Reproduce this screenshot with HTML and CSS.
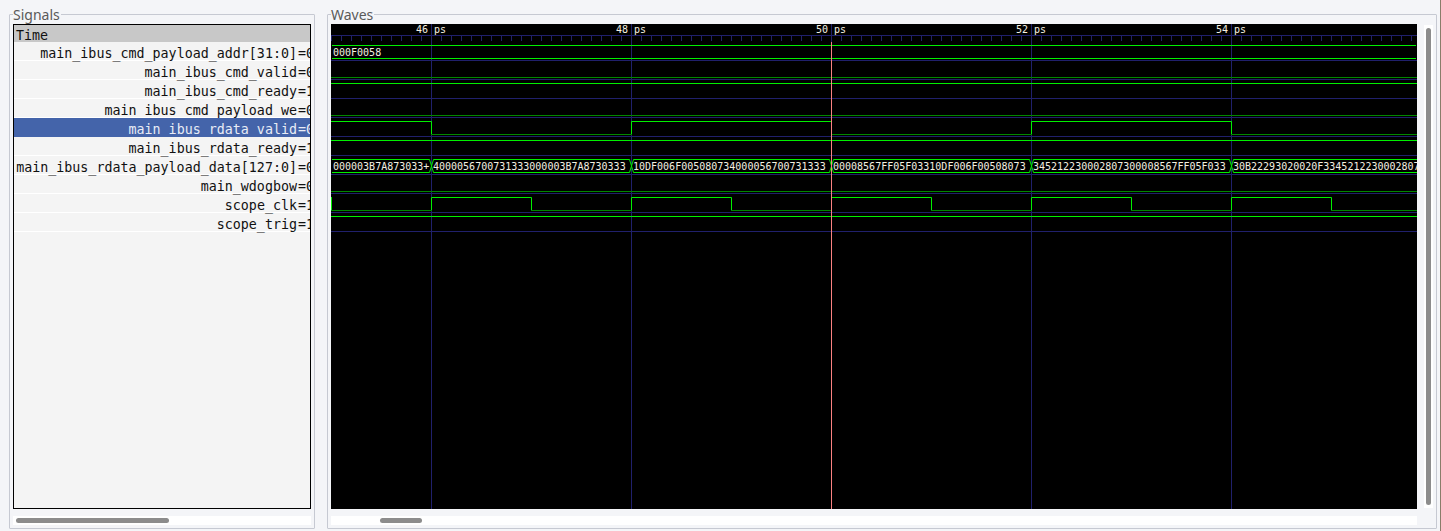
FILE: index.html
```html
<!DOCTYPE html>
<html lang="en">
<head>
    <meta charset="UTF-8">
    <title>Waves</title>
    <link rel="stylesheet" href="styles.css">
</head>
<body>
    <fieldset class="frame signals">
        <legend>Signals</legend>
        <div class="signal-list">
            <div class="time-row">Time</div>
            <div class="row"><span>main_ibus_cmd_payload_addr[31:0]</span><span class="val">=0</span></div>
            <div class="row"><span>main_ibus_cmd_valid</span><span class="val">=0</span></div>
            <div class="row"><span>main_ibus_cmd_ready</span><span class="val">=1</span></div>
            <div class="row"><span>main_ibus_cmd_payload_we</span><span class="val">=0</span></div>
            <div class="row selected"><span>main_ibus_rdata_valid</span><span class="val">=0</span></div>
            <div class="row"><span>main_ibus_rdata_ready</span><span class="val">=1</span></div>
            <div class="row"><span>main_ibus_rdata_payload_data[127:0]</span><span class="val">=0</span></div>
            <div class="row"><span>main_wdogbow</span><span class="val">=0</span></div>
            <div class="row"><span>scope_clk</span><span class="val">=1</span></div>
            <div class="row"><span>scope_trig</span><span class="val">=1</span></div>
        </div>
        <div class="hscroll"><div class="thumb signals-thumb"></div></div>
    </fieldset>

    <fieldset class="frame waves">
        <legend>Waves</legend>
        <div class="waves-body">
            <div class="waves-left">
                <svg class="wave-canvas" width="1086" height="485" viewBox="331 24 1086 485">
                    <!-- grid -->
                    <g class="grid">
                        <path d="M331 35.5H1417M331 60.5H1417M331 79.5H1417M331 98.5H1417M331 117.5H1417M331 136.5H1417M331 155.5H1417M331 174.5H1417M331 193.5H1417M331 212.5H1417M331 231.5H1417"/>
                        <path d="M431.5 24V509M631.5 24V509M831.5 24V42M1031.5 24V509M1231.5 24V509"/>
                        <path class="ticks" d="M331 38.5H1417"/>
                    </g>

                    <!-- 1 bit signals -->
                    <path class="hi" d="M332 45.5H1416M332 58.5H1416"/>
                    <path class="lo" d="M331 77.5H1417"/>
                    <path class="hi" d="M331 83.5H1417"/>
                    <path class="lo" d="M331 115.5H1417"/>
                    <path class="hi" d="M331 121.5H431.5V134M631.5 134V121.5H831.5V134M1031.5 134V121.5H1231.5V134"/>
                    <path class="lo" d="M431 134.5H632M831 134.5H1032M1231 134.5H1417"/>
                    <path class="hi" d="M331 140.5H1417"/>
                    <path class="lo" d="M331 191.5H1417"/>
                    <path class="hi" d="M431.5 210V197.5H531.5V210M631.5 210V197.5H731.5V210M831.5 210V197.5H931.5V210M1031.5 210V197.5H1131.5V210M1231.5 210V197.5H1331.5V210"/>
                    <path class="hi" d="M331.5 197V210"/>
                    <path class="lo" d="M331 210.5H432M531 210.5H632M731 210.5H832M931 210.5H1032M1131 210.5H1232M1331 210.5H1417"/>
                    <path class="hi" d="M331 216.5H1417"/>

                    <!-- data bus -->
                    <path class="hi" d="M332 159.5H429.5L433.5 172.5H629.5L633.5 159.5H829.5L833.5 172.5H1029.5L1033.5 159.5H1229.5L1233.5 172.5H1417"/>
                    <path class="hi" d="M332 172.5H429.5L433.5 159.5H629.5L633.5 172.5H829.5L833.5 159.5H1029.5L1033.5 172.5H1229.5L1233.5 159.5H1417"/>

                    <path class="cursor" d="M831.5 42V509"/>

                    <!-- time labels -->
                    <g class="time-label">
                        <text x="428" y="33" text-anchor="end">46</text><text x="434" y="33">ps</text>
                        <text x="628" y="33" text-anchor="end">48</text><text x="634" y="33">ps</text>
                        <text x="828" y="33" text-anchor="end">50</text><text x="834" y="33">ps</text>
                        <text x="1028" y="33" text-anchor="end">52</text><text x="1034" y="33">ps</text>
                        <text x="1228" y="33" text-anchor="end">54</text><text x="1234" y="33">ps</text>
                    </g>

                    <!-- bus values -->
                    <g class="bus-value">
                        <text x="333" y="56">000F0058</text>
                        <text x="333" y="170">000003B7A873033+</text>
                        <text x="433" y="170">4000056700731333000003B7A8730333</text>
                        <text x="633" y="170">10DF006F005080734000056700731333</text>
                        <text x="833" y="170">00008567FF05F03310DF006F00508073</text>
                        <text x="1033" y="170">345212230002807300008567FF05F033</text>
                        <text x="1233" y="170">30B22293020020F33452122300028073</text>
                    </g>
                </svg>
                <div class="hscroll"><div class="thumb waves-thumb"></div></div>
            </div>
            <div class="vscroll"><div class="vthumb"></div></div>
        </div>
    </fieldset>
</body>
</html>
```

FILE: styles.css
```css
html, body {
    height: 100%;
}

body {
    display: flex;
    gap: 12px;
    box-sizing: border-box;
    height: 531px;
    margin: 0;
    padding: 6px 3px 2px 9px;
    overflow: hidden;
    background-color: #f4f5f8;
    border-right: 1px solid #8a7d6a;
    font-family: "DejaVu Sans Mono", monospace;
}

.frame {
    box-sizing: border-box;
    min-width: 0;
    margin: 0;
    padding: 1px 3px 3px 3px;
    border: 1px solid #c6c9d2;
    border-radius: 1px;
}

.frame legend {
    margin-left: 0;
    padding: 0 1px 0 0;
    font-family: "Noto Sans", sans-serif;
    font-size: 14px;
    line-height: 17px;
    color: #5a5a5a;
}

.signals {
    width: 306px;
    flex: none;
}

.waves {
    flex: 1;
}

.signal-list {
    box-sizing: border-box;
    height: 485px;
    border: 1px solid #000;
    background-color: #f4f4f4;
    font-size: 13.33px;
    color: #111;
}

.time-row {
    box-sizing: border-box;
    height: 17px;
    padding: 2px 0 0 2px;
    line-height: 17px;
    overflow: hidden;
    background-color: #c8c8c8;
}

.row {
    display: flex;
    justify-content: flex-end;
    box-sizing: border-box;
    height: 19px;
    padding-top: 3px;
    line-height: 17px;
    white-space: nowrap;
    border-bottom: 1px solid #fff;
}

.row .val {
    box-sizing: border-box;
    width: 13px;
    padding-left: 1px;
    overflow: hidden;
}

.selected {
    position: relative;
    overflow: hidden;
    background-color: #4464aa;
    border-bottom: none;
    color: #e8ecf6;
}

.hscroll {
    height: 9px;
    margin-top: 7px;
    padding: 2px 0;
    box-sizing: border-box;
    background-color: #fff;
}

.thumb {
    height: 5px;
    border-radius: 3px;
    background-color: #8c8c8c;
}

.signals-thumb {
    width: 153px;
    margin-left: 3px;
}

.waves-thumb {
    width: 42px;
    margin-left: 49px;
}

.waves-body {
    display: flex;
    gap: 7px;
}

.waves-left {
    width: 1086px;
}

.wave-canvas {
    display: block;
    background-color: #000;
}

.grid path {
    fill: none;
    stroke: #20206c;
    stroke-width: 1;
}

.grid .ticks {
    stroke-width: 5;
    stroke-dasharray: 1 9;
}

.cursor {
    fill: none;
    stroke: #fa8282;
    stroke-width: 1;
}

.hi, .lo {
    fill: none;
    stroke-width: 1;
}

.hi {
    stroke: #00f000;
}

.lo {
    stroke: #008800;
}

.wave-canvas text {
    font-family: "DejaVu Sans Mono", monospace;
    font-size: 10px;
    fill: #f4f0e0;
}

.vscroll {
    width: 9px;
    height: 483px;
    margin-top: 1px;
    padding: 3px 2px;
    box-sizing: border-box;
    background-color: #fff;
}

.vthumb {
    width: 5px;
    height: 100%;
    border-radius: 3px;
    background-color: #8c8c8c;
}
```
